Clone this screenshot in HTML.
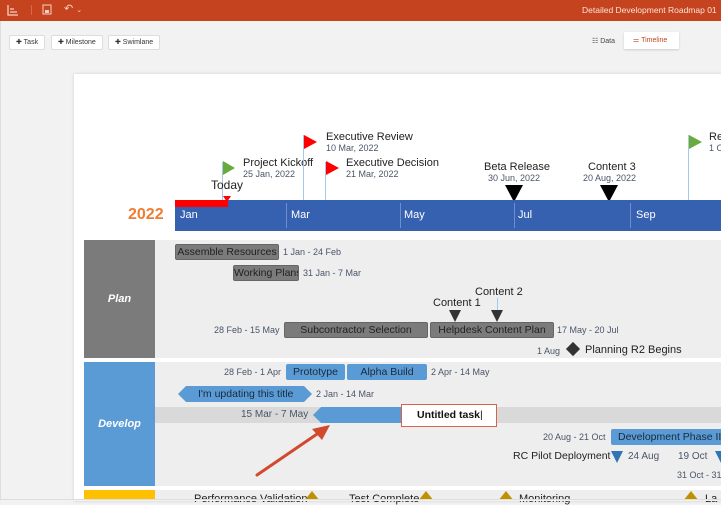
<!DOCTYPE html>
<html><head><meta charset="utf-8"><style>
*{margin:0;padding:0;box-sizing:border-box}
body{width:721px;height:501px;overflow:hidden;background:#f2f2f2;font-family:"Liberation Sans",Arial,sans-serif;position:relative}
.a{position:absolute;white-space:nowrap}
.btn{position:absolute;top:35px;height:15px;background:#fff;border:1px solid #ddd;border-radius:2px;font-size:7px;color:#333;line-height:13px;padding:0 6px;white-space:nowrap}
.d{font-size:9px;color:#4a5568}
.t{font-size:11px;color:#222}
.gbar{position:absolute;background:#7b7b7b;border:1px solid #666;border-radius:2px;color:#222;font-size:10.5px;text-align:center;height:16px;line-height:14px;white-space:nowrap;overflow:hidden}
.bbar{position:absolute;background:#5b9bd5;color:#1a2a3a;font-size:10.5px;text-align:center;height:16px;line-height:16px;border-radius:2px;white-space:nowrap;overflow:hidden}
.tri{position:absolute;width:0;height:0}
.m{position:absolute;color:#fff;font-size:11px;top:209px}
.div{position:absolute;top:203px;width:1px;height:25px;background:#6f8fcc}
</style></head><body>
<div class="a" style="left:0;top:0;width:721px;height:21px;background:#c5441f"></div>
<svg class="a" style="left:7px;top:4px" width="12" height="12" viewBox="0 0 12 12"><path d="M1 1v10h10M3 5h4M3 8h7" stroke="#f6d0c0" stroke-width="1.3" fill="none"/></svg>
<div class="a" style="left:31px;top:5px;width:1px;height:10px;background:#d66a4a"></div>
<svg class="a" style="left:42px;top:4px" width="10" height="11"><rect x="1" y="1" width="8" height="9" stroke="#f6d0c0" fill="none"/><rect x="3" y="6" width="4" height="3" fill="#f6d0c0"/></svg>
<div class="a" style="left:64px;top:2px;color:#f6d0c0;font-size:11px">↶ <span style="font-size:7px">⌄</span></div>
<div class="a" style="left:582px;top:5px;color:#fbe3d9;font-size:8.5px">Detailed Development Roadmap 01</div>
<div class="btn" style="left:9px">✚ Task</div>
<div class="btn" style="left:51px">✚ Milestone</div>
<div class="btn" style="left:108px">✚ Swimlane</div>
<div class="a" style="left:592px;top:37px;font-size:7px;color:#444">☷ Data</div>
<div class="a" style="left:624px;top:32px;width:55px;height:17px;background:#fff;box-shadow:0 1px 2px #ccc;font-size:7px;color:#c5441f;line-height:17px;padding-left:9px">⚌ Timeline</div>
<div class="a" style="left:0;top:21px;width:1px;height:480px;background:#ddd"></div>
<div class="a" style="left:74px;top:74px;width:647px;height:427px;background:#fff;box-shadow:0 0 3px #ccc"></div>
<div class="a" style="left:222px;top:162px;width:1px;height:38px;background:#a8c8e8"></div>
<div class="tri" style="left:223px;top:161px;border-left:12px solid #6aab3e;border-top:7px solid transparent;border-bottom:7px solid transparent"></div>
<div class="a t" style="left:243px;top:157px">Project Kickoff</div><div class="a d" style="left:243px;top:169px">25 Jan, 2022</div>
<div class="a" style="left:303px;top:135px;width:1px;height:65px;background:#a8c8e8"></div>
<div class="tri" style="left:304px;top:135px;border-left:13px solid #f00;border-top:7px solid transparent;border-bottom:7px solid transparent"></div>
<div class="a t" style="left:326px;top:131px">Executive Review</div><div class="a d" style="left:326px;top:143px">10 Mar, 2022</div>
<div class="a" style="left:325px;top:162px;width:1px;height:38px;background:#a8c8e8"></div>
<div class="tri" style="left:326px;top:161px;border-left:13px solid #f00;border-top:7px solid transparent;border-bottom:7px solid transparent"></div>
<div class="a t" style="left:346px;top:157px">Executive Decision</div><div class="a d" style="left:346px;top:169px">21 Mar, 2022</div>
<div class="a t" style="left:484px;top:161px">Beta Release</div><div class="a d" style="left:488px;top:173px">30 Jun, 2022</div>
<div class="tri" style="left:505px;top:185px;border-top:17px solid #000;border-left:9px solid transparent;border-right:9px solid transparent"></div>
<div class="a t" style="left:588px;top:161px">Content 3</div><div class="a d" style="left:583px;top:173px">20 Aug, 2022</div>
<div class="tri" style="left:600px;top:185px;border-top:17px solid #000;border-left:9px solid transparent;border-right:9px solid transparent"></div>
<div class="a" style="left:688px;top:135px;width:1px;height:65px;background:#a8c8e8"></div>
<div class="tri" style="left:689px;top:135px;border-left:13px solid #6aab3e;border-top:7px solid transparent;border-bottom:7px solid transparent"></div>
<div class="a t" style="left:709px;top:131px">Re</div><div class="a d" style="left:709px;top:143px">1 O</div>
<div class="a" style="left:211px;top:178px;font-size:12px;color:#222">Today</div>
<div class="a" style="left:128px;top:206px;font-size:16px;font-weight:bold;color:#ed7d31">2022</div>
<div class="a" style="left:175px;top:200px;width:546px;height:31px;background:#3660b0"></div>
<div class="a" style="left:175px;top:200px;width:53px;height:7px;background:#f00"></div>
<div class="tri" style="left:223px;top:196px;border-top:6px solid #f00;border-left:4px solid transparent;border-right:4px solid transparent"></div>
<div class="m" style="left:180px">Jan</div><div class="div" style="left:286px"></div>
<div class="m" style="left:291px">Mar</div><div class="div" style="left:400px"></div>
<div class="m" style="left:404px">May</div><div class="div" style="left:514px"></div>
<div class="m" style="left:518px">Jul</div><div class="div" style="left:630px"></div>
<div class="m" style="left:636px">Sep</div>
<div class="a" style="left:84px;top:240px;width:71px;height:118px;background:#7b7b7b;color:#fff;font-weight:bold;font-style:italic;font-size:11px;text-align:center;line-height:118px">Plan</div>
<div class="a" style="left:155px;top:240px;width:566px;height:118px;background:#eeeeee"></div>
<div class="gbar" style="left:175px;top:244px;width:104px">Assemble Resources</div>
<div class="a d" style="left:283px;top:247px">1 Jan - 24 Feb</div>
<div class="gbar" style="left:233px;top:265px;width:66px">Working Plans</div>
<div class="a d" style="left:303px;top:268px">31 Jan - 7 Mar</div>
<div class="a t" style="left:475px;top:286px">Content 2</div>
<div class="a" style="left:497px;top:298px;width:1px;height:12px;background:#a8c8e8"></div>
<div class="a t" style="left:433px;top:297px">Content 1</div>
<div class="tri" style="left:449px;top:310px;border-top:12px solid #333;border-left:6px solid transparent;border-right:6px solid transparent"></div>
<div class="tri" style="left:491px;top:310px;border-top:12px solid #333;border-left:6px solid transparent;border-right:6px solid transparent"></div>
<div class="a d" style="left:214px;top:325px">28 Feb - 15 May</div>
<div class="gbar" style="left:284px;top:322px;width:144px">Subcontractor Selection</div>
<div class="gbar" style="left:430px;top:322px;width:124px">Helpdesk Content Plan</div>
<div class="a d" style="left:557px;top:325px">17 May - 20 Jul</div>
<div class="a d" style="left:537px;top:346px">1 Aug</div>
<div class="a" style="left:568px;top:344px;width:10px;height:10px;background:#333;transform:rotate(45deg)"></div>
<div class="a t" style="left:585px;top:344px">Planning R2 Begins</div>
<div class="a" style="left:84px;top:362px;width:71px;height:124px;background:#5b9bd5;color:#fff;font-weight:bold;font-style:italic;font-size:11px;text-align:center;line-height:124px">Develop</div>
<div class="a" style="left:155px;top:362px;width:566px;height:124px;background:#eeeeee"></div>
<div class="a d" style="left:224px;top:367px">28 Feb - 1 Apr</div>
<div class="bbar" style="left:286px;top:364px;width:59px">Prototype</div>
<div class="bbar" style="left:347px;top:364px;width:80px">Alpha Build</div>
<div class="a d" style="left:431px;top:367px">2 Apr - 14 May</div>
<svg class="a" style="left:178px;top:385px" width="134" height="18"><polygon points="0,9 8,1 126,1 134,9 126,17 8,17" fill="#5b9bd5"/></svg>
<div class="a" style="left:198px;top:388px;color:#1a2a3a;font-size:10.5px">I'm updating this title</div>
<div class="a d" style="left:316px;top:389px">2 Jan - 14 Mar</div>
<div class="a" style="left:155px;top:407px;width:566px;height:16px;background:#d9d9d9"></div>
<div class="a d" style="left:241px;top:409px;font-size:10px">15 Mar - 7 May</div>
<svg class="a" style="left:313px;top:407px" width="100" height="16"><polygon points="0,8 8,0 89,0 97,8 89,16 8,16" fill="#5b9bd5"/><polygon points="89,0 97,8 89,16" fill="#9fc5ea"/></svg>
<div class="a" style="left:401px;top:404px;width:96px;height:23px;background:#fff;border:1px solid #d9634a"></div>
<div class="a" style="left:417px;top:409px;font-size:10.5px;font-weight:bold;color:#111">Untitled task<span style="font-weight:normal">|</span></div>
<svg class="a" style="left:250px;top:420px" width="85" height="60"><line x1="7" y1="55" x2="70" y2="12" stroke="#d24a2e" stroke-width="3" stroke-linecap="round"/><polygon points="80,5 62,9 72,20" fill="#d24a2e"/></svg>
<div class="a d" style="left:543px;top:432px">20 Aug - 21 Oct</div>
<div class="bbar" style="left:611px;top:429px;width:110px;border-radius:2px 0 0 2px;text-align:left;padding-left:7px">Development Phase II</div>
<div class="a" style="left:513px;top:450px;font-size:10.5px;color:#222">RC Pilot Deployment</div>
<div class="tri" style="left:611px;top:451px;border-top:12px solid #2e75b6;border-left:6px solid transparent;border-right:6px solid transparent"></div>
<div class="a" style="left:628px;top:451px;color:#4a5568;font-size:10px">24 Aug</div>
<div class="a" style="left:678px;top:451px;color:#4a5568;font-size:10px">19 Oct</div>
<div class="tri" style="left:715px;top:451px;border-top:12px solid #2e75b6;border-left:6px solid transparent;border-right:6px solid transparent"></div>
<div class="a d" style="left:677px;top:470px">31 Oct - 31</div>
<div class="a" style="left:84px;top:490px;width:71px;height:11px;background:#ffc000"></div>
<div class="a" style="left:155px;top:490px;width:566px;height:11px;background:#eeeeee"></div>
<div class="a t" style="left:194px;top:493px">Performance Validation</div>
<div class="tri" style="left:304px;top:491px;border-bottom:10px solid #bf9000;border-left:8px solid transparent;border-right:8px solid transparent"></div>
<div class="a t" style="left:349px;top:493px">Test Complete</div>
<div class="tri" style="left:418px;top:491px;border-bottom:10px solid #bf9000;border-left:8px solid transparent;border-right:8px solid transparent"></div>
<div class="tri" style="left:498px;top:491px;border-bottom:10px solid #bf9000;border-left:8px solid transparent;border-right:8px solid transparent"></div>
<div class="a t" style="left:519px;top:493px">Monitoring</div>
<div class="tri" style="left:683px;top:491px;border-bottom:10px solid #bf9000;border-left:8px solid transparent;border-right:8px solid transparent"></div>
<div class="a t" style="left:705px;top:493px">La</div>
<div class="a" style="left:0;top:499px;width:721px;height:2px;background:#f2f2f2;border-top:1px solid #ddd"></div>
</body></html>
